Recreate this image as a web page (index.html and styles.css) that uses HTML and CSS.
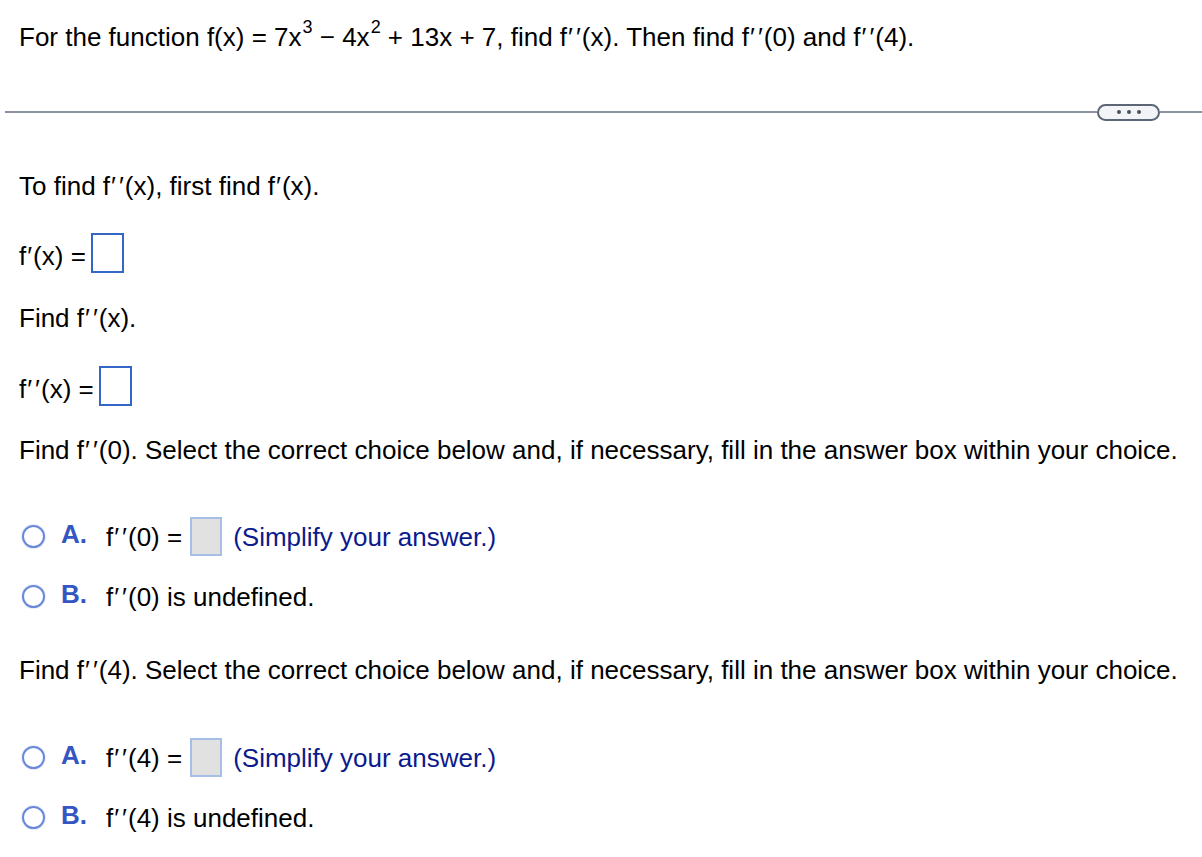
FILE: index.html
```html
<!DOCTYPE html>
<html>
<head>
<meta charset="utf-8">
<link rel="stylesheet" href="styles.css">
</head>
<body>
<div class="page">
  <p class="question">For the function f(x) = 7x<sup>3</sup> − 4x<sup>2</sup> + 13x + 7, find f<span class="pr">′′</span>(x). Then find f<span class="pr">′′</span>(0) and f<span class="pr">′′</span>(4).</p>

  <div class="divider">
    <span class="rule"></span>
    <span class="pill"><i></i><i></i><i></i></span>
    <span class="rule tail"></span>
  </div>

  <div class="work">
    <p class="line first">To find f<span class="pr">′′</span>(x), first find f<span class="pr">′</span>(x).</p>
    <div class="eq eq1"><span>f<span class="pr">′</span>(x) =</span><span class="box"></span></div>
    <p class="line l2">Find f<span class="pr">′′</span>(x).</p>
    <div class="eq eq2"><span>f<span class="pr">′′</span>(x) =</span><span class="box"></span></div>
    <p class="line l3">Find f<span class="pr">′′</span>(0). Select the correct choice below and, if necessary, fill in the answer box within your choice.</p>

    <div class="choices c1">
      <div class="choice">
        <span class="radio"></span><span class="letter">A.</span>
        <span class="ctext">f<span class="pr">′′</span>(0) =</span><span class="gbox"></span><span class="hint">(Simplify your answer.)</span>
      </div>
      <div class="choice">
        <span class="radio"></span><span class="letter">B.</span>
        <span class="ctext">f<span class="pr">′′</span>(0) is undefined.</span>
      </div>
    </div>

    <p class="line l4">Find f<span class="pr">′′</span>(4). Select the correct choice below and, if necessary, fill in the answer box within your choice.</p>

    <div class="choices c2">
      <div class="choice">
        <span class="radio"></span><span class="letter">A.</span>
        <span class="ctext">f<span class="pr">′′</span>(4) =</span><span class="gbox"></span><span class="hint">(Simplify your answer.)</span>
      </div>
      <div class="choice">
        <span class="radio"></span><span class="letter">B.</span>
        <span class="ctext">f<span class="pr">′′</span>(4) is undefined.</span>
      </div>
    </div>
  </div>
</div>
</body>
</html>
```

FILE: styles.css
```css
html, body {
  margin: 0;
  padding: 0;
  background: #ffffff;
}

.page {
  font-family: "Liberation Sans", Arial, sans-serif;
  font-size: 26px;
  line-height: 26px;
  color: #000;
}

p { margin: 0; }

.pr {
  letter-spacing: 3px;
  margin-left: 1px;
  margin-right: -2px;
}

.question {
  padding: 24px 0 0 19px;
}

.question sup {
  font-size: 18px;
  line-height: 0;
  vertical-align: 0;
  position: relative;
  top: -13px;
  margin-left: 1px;
}

.divider {
  display: flex;
  align-items: center;
  margin: 53px 0 0 5px;
  height: 18px;
}

.rule {
  flex: 1;
  height: 2px;
  background: #8b93a1;
}

.rule.tail {
  flex: 0 0 42px;
}

.pill {
  box-sizing: border-box;
  width: 63px;
  height: 17px;
  border: 2px solid #5d6676;
  border-radius: 9px;
  background: #f2f4f7;
  display: flex;
  align-items: center;
  justify-content: center;
  gap: 6px;
}

.pill i {
  width: 4px;
  height: 4px;
  border-radius: 50%;
  background: #4a5260;
}

.work {
  padding-left: 19px;
}

.line.first { margin-top: 52px; }

.eq {
  display: flex;
  align-items: center;
}

.eq > span:first-child { margin-top: 6px; }

.eq1 { margin-top: 34px; }

.box {
  box-sizing: border-box;
  width: 33px;
  height: 40px;
  border: 2px solid #3466c8;
  margin-left: 5px;
}

.line.l2 { margin-top: 32px; }
.eq2 { margin-top: 35px; }
.line.l3 { margin-top: 31px; }

.choices {
  display: flex;
  flex-direction: column;
  gap: 20px;
}

.c1 { margin-top: 53px; }
.c2 { margin-top: 54px; }

.line.l4 { margin-top: 41px; }

.choice {
  display: flex;
  align-items: center;
  height: 40px;
}

.radio {
  box-sizing: border-box;
  width: 23px;
  height: 23px;
  border: 2px solid #6a88d8;
  border-radius: 50%;
  margin-left: 3px;
  box-shadow: 0 0 1.5px #8fa7e6;
}

.letter {
  color: #3456c2;
  font-weight: bold;
  margin-left: 16px;
  margin-top: -4px;
  width: 45px;
}

.ctext {
  margin-top: 2px;
}

.gbox {
  box-sizing: border-box;
  width: 32px;
  height: 39px;
  border: 2px solid #a6bfe9;
  background: #e1e1e1;
  margin-left: 8px;
}

.hint {
  color: #0b1a8c;
  margin-left: 11px;
  margin-top: 2px;
}
```
